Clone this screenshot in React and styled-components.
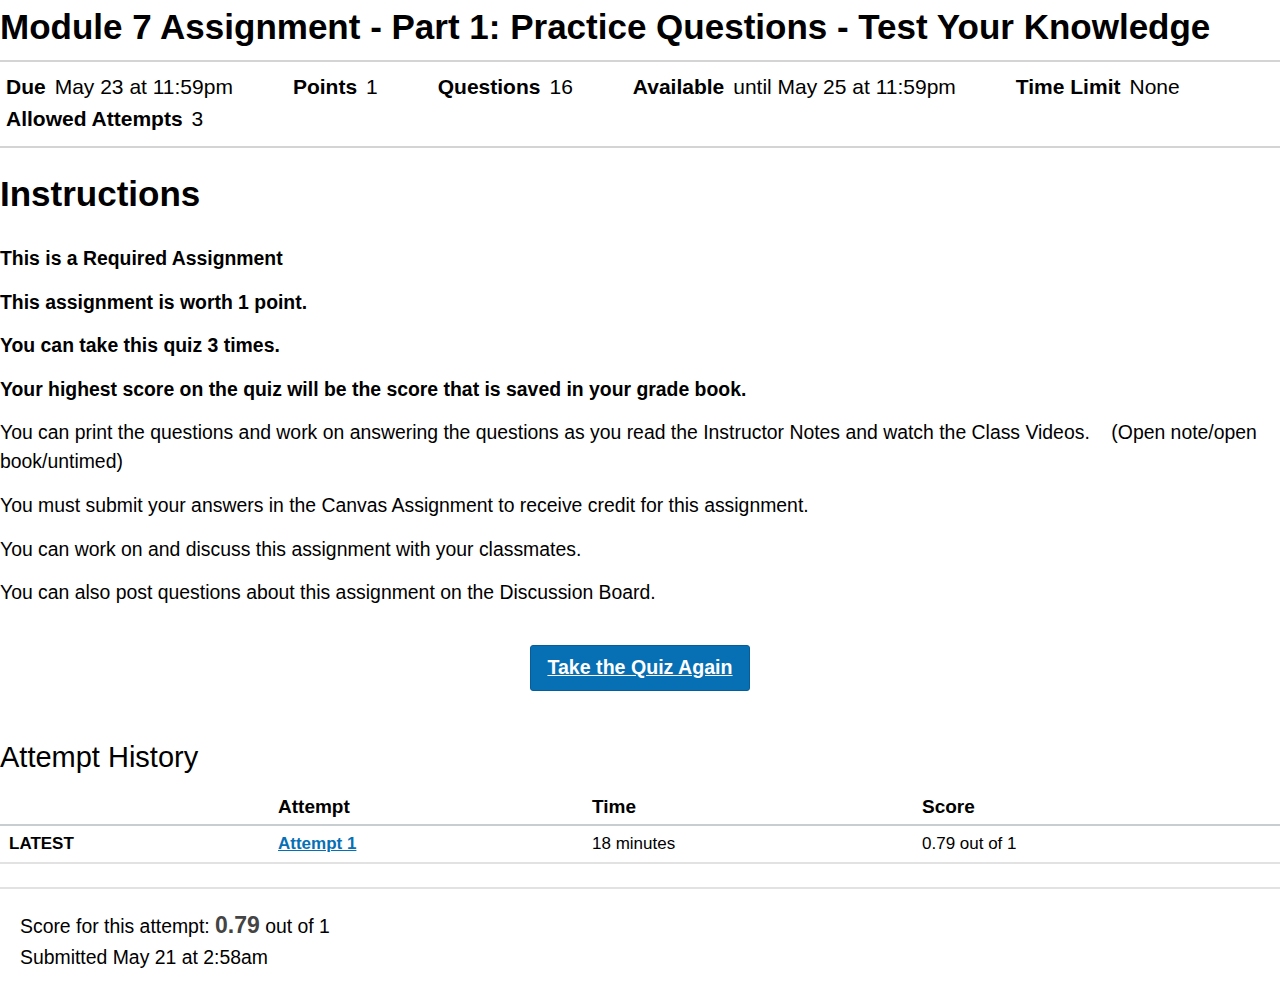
import styled, { createGlobalStyle } from "styled-components";

const GlobalStyle = createGlobalStyle`
  body {
    margin: 0;
    background: #fff;
    color: #000;
    font-family: "Liberation Sans", Arial, sans-serif;
  }
`;

const details = [
  { label: "Due", value: "May 23 at 11:59pm" },
  { label: "Points", value: "1" },
  { label: "Questions", value: "16" },
  { label: "Available", value: "until May 25 at 11:59pm" },
  { label: "Time Limit", value: "None" },
  { label: "Allowed Attempts", value: "3" },
];

const attempts = [
  { tag: "LATEST", name: "Attempt 1", time: "18 minutes", score: "0.79 out of 1" },
];

function App() {
  return (
    <>
      <GlobalStyle />
      <STYLEDPage>
        <STYLEDHeader>
          <STYLEDTitle>
            Module 7 Assignment - Part 1: Practice Questions - Test Your Knowledge
          </STYLEDTitle>
        </STYLEDHeader>

        <STYLEDDetails>
          {details.map((d) => (
            <STYLEDDetail key={d.label}>
              <STYLEDLabel>{d.label}</STYLEDLabel>
              {d.value}
            </STYLEDDetail>
          ))}
        </STYLEDDetails>

        <STYLEDHeading>Instructions</STYLEDHeading>
        <STYLEDParagraph $bold>This is a Required Assignment</STYLEDParagraph>
        <STYLEDParagraph $bold>This assignment is worth 1 point.</STYLEDParagraph>
        <STYLEDParagraph $bold>You can take this quiz 3 times.</STYLEDParagraph>
        <STYLEDParagraph $bold>
          Your highest score on the quiz will be the score that is saved in your grade book.
        </STYLEDParagraph>
        <STYLEDParagraph>
          You can print the questions and work on answering the questions as you read the
          Instructor Notes and watch the Class Videos.{"\u00a0\u00a0\u00a0"} (Open note/open
          book/untimed)
        </STYLEDParagraph>
        <STYLEDParagraph>
          You must submit your answers in the Canvas Assignment to receive credit for this
          assignment.
        </STYLEDParagraph>
        <STYLEDParagraph>
          You can work on and discuss this assignment with your classmates.
        </STYLEDParagraph>
        <STYLEDParagraph>
          You can also post questions about this assignment on the Discussion Board.
        </STYLEDParagraph>

        <STYLEDActions>
          <STYLEDButton href="#">Take the Quiz Again</STYLEDButton>
        </STYLEDActions>

        <STYLEDSubheading>Attempt History</STYLEDSubheading>
        <STYLEDTable>
          <STYLEDRow $head>
            <STYLEDCell />
            <STYLEDCell>Attempt</STYLEDCell>
            <STYLEDCell>Time</STYLEDCell>
            <STYLEDCell>Score</STYLEDCell>
          </STYLEDRow>
          {attempts.map((a) => (
            <STYLEDRow key={a.name}>
              <STYLEDCell $tag>{a.tag}</STYLEDCell>
              <STYLEDCell>
                <STYLEDLink href="#">{a.name}</STYLEDLink>
              </STYLEDCell>
              <STYLEDCell>{a.time}</STYLEDCell>
              <STYLEDCell>{a.score}</STYLEDCell>
            </STYLEDRow>
          ))}
        </STYLEDTable>

        <STYLEDScoreBox>
          <div>
            Score for this attempt: <STYLEDScore>0.79</STYLEDScore> out of 1
          </div>
          <div>Submitted May 21 at 2:58am</div>
        </STYLEDScoreBox>
      </STYLEDPage>
    </>
  );
}

export default App;

const STYLEDPage = styled.div`
  width: 1280px;
`;

const STYLEDHeader = styled.header`
  padding: 5px 0 12px;
  border-bottom: 2px solid #d4d4d4;
`;

const STYLEDTitle = styled.h1`
  margin: 0;
  font-size: 35px;
  line-height: 43px;
  font-weight: bold;
`;

const STYLEDDetails = styled.ul`
  display: flex;
  flex-wrap: wrap;
  list-style: none;
  margin: 0;
  padding: 9px 6px 11px;
  border-bottom: 2px solid #d4d4d4;
  font-size: 21px;
  line-height: 32px;
`;

const STYLEDDetail = styled.li`
  margin-right: 60px;
  white-space: nowrap;
`;

const STYLEDLabel = styled.strong`
  margin-right: 9px;
`;

const STYLEDHeading = styled.h2`
  margin: 24px 0 29px;
  font-size: 35px;
  line-height: 43px;
  font-weight: bold;
`;

const STYLEDParagraph = styled.p`
  margin: 0 0 14.6px;
  font-size: 19.4px;
  line-height: 29px;
  font-weight: ${(p) => (p.$bold ? "bold" : "normal")};
`;

const STYLEDActions = styled.div`
  display: flex;
  justify-content: center;
  padding-top: 23px;
`;

const STYLEDButton = styled.a`
  display: inline-flex;
  align-items: center;
  justify-content: center;
  width: 220px;
  height: 46px;
  box-sizing: border-box;
  background: #0770b5;
  border: 1px solid #065e98;
  border-radius: 3px;
  color: #fff;
  font-size: 19.6px;
  font-weight: bold;
  text-decoration: underline;
`;

const STYLEDSubheading = styled.h3`
  margin: 48px 0 16px;
  font-size: 29px;
  line-height: 36px;
  font-weight: normal;
`;

const STYLEDTable = styled.div`
  border-bottom: 2px solid #e2e2e2;
`;

const STYLEDRow = styled.div`
  display: grid;
  grid-template-columns: 269px 314px 330px 1fr;
  padding: ${(p) => (p.$head ? "4px 0 5px" : "6px 0 6px")};
  border-bottom: ${(p) => (p.$head ? "2px solid #c7cdd1" : "none")};
  font-size: ${(p) => (p.$head ? "19px" : "17px")};
  font-weight: ${(p) => (p.$head ? "bold" : "normal")};
  line-height: 24px;
`;

const STYLEDCell = styled.div`
  padding-left: 9px;
  font-weight: ${(p) => (p.$tag ? "bold" : "inherit")};
`;

const STYLEDLink = styled.a`
  color: #0770b5;
  font-weight: bold;
  text-decoration: underline;
`;

const STYLEDScoreBox = styled.div`
  margin-top: 23px;
  border-top: 2px solid #e2e2e2;
  padding: 21px 20px;
  font-size: 19.4px;
  line-height: 31px;
`;

const STYLEDScore = styled.span`
  font-size: 23px;
  font-weight: bold;
  color: #444;
`;
